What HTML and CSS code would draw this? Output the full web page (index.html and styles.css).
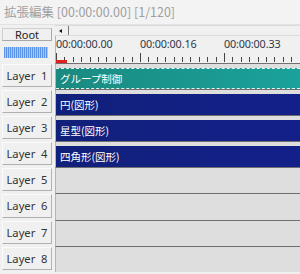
FILE: index.html
```html
<!DOCTYPE html>
<html>
<head>
<meta charset="utf-8">
<link rel="stylesheet" href="styles.css">
</head>
<body>
<div class="title">拡張編集 [00:00:00.00] [1/120]</div>
<div class="head">
  <div class="side-head">
    <div class="root">Root</div>
    <div class="meter"></div>
  </div>
  <div class="time-head">
    <div class="scroll"><span class="arrow"></span><span class="thumb"></span></div>
    <div class="ruler">
      <div class="labels"><span>00:00:00.00</span><span>00:00:00.16</span><span>00:00:00.33</span></div>
      <div class="ticks"></div>
      <div class="mark"></div>
    </div>
  </div>
</div>
<div class="layers">
  <div class="btn-cell"><div class="btn">Layer&nbsp;&nbsp;1</div></div>
  <div class="track"><div class="obj group">グループ制御</div></div>
  <div class="btn-cell"><div class="btn">Layer&nbsp;&nbsp;2</div></div>
  <div class="track"><div class="obj shape">円(図形)</div></div>
  <div class="btn-cell"><div class="btn">Layer&nbsp;&nbsp;3</div></div>
  <div class="track"><div class="obj shape">星型(図形)</div></div>
  <div class="btn-cell"><div class="btn">Layer&nbsp;&nbsp;4</div></div>
  <div class="track"><div class="obj shape">四角形(図形)</div></div>
  <div class="btn-cell"><div class="btn">Layer&nbsp;&nbsp;5</div></div>
  <div class="track"></div>
  <div class="btn-cell"><div class="btn">Layer&nbsp;&nbsp;6</div></div>
  <div class="track"></div>
  <div class="btn-cell"><div class="btn">Layer&nbsp;&nbsp;7</div></div>
  <div class="track"></div>
  <div class="btn-cell"><div class="btn">Layer&nbsp;&nbsp;8</div></div>
  <div class="track"></div>
</div>
</body>
</html>
```
FILE: styles.css
```css
html, body {
  margin: 0;
  padding: 0;
}
body {
  width: 300px;
  height: 274px;
  overflow: hidden;
  background: #f0f0f0;
  font-family: "Noto Sans", "Noto Sans CJK JP", sans-serif;
  color: #222;
}
.title {
  box-sizing: border-box;
  height: 25px;
  line-height: 24px;
  padding-left: 4px;
  font-size: 12.5px;
  color: #a0a0a0;
  background: #f3f3f3;
  border-bottom: 1px solid #e2e2e2;
  font-family: "Noto Sans CJK JP", "Noto Sans", sans-serif;
  white-space: nowrap;
}
.head {
  display: flex;
  height: 37.7px;
}
.side-head {
  width: 55px;
  flex: none;
  box-sizing: border-box;
  padding: 3px 3px 0 2px;
}
.root {
  box-sizing: border-box;
  height: 13px;
  line-height: 11px;
  font-size: 11px;
  text-align: center;
  background: #f0f0f0;
  border: 1px solid;
  border-color: #d0d0d0 #a8a8a8 #a8a8a8 #d0d0d0;
}
.meter {
  margin: 6px 0 0 2px;
  width: 44px;
  height: 11px;
  background: repeating-linear-gradient(to right, #5b93e6 0 1px, #a9c7f2 1px 2px);
}
.time-head {
  flex: 1;
  display: flex;
  flex-direction: column;
  min-width: 0;
}
.scroll {
  box-sizing: border-box;
  height: 11px;
  border-top: 1px solid #dadada;
  border-bottom: 1px solid #dadada;
  display: flex;
  align-items: center;
}
.arrow {
  margin-left: 4px;
  width: 0;
  height: 0;
  border-top: 2.5px solid transparent;
  border-bottom: 2.5px solid transparent;
  border-right: 3px solid #111;
}
.thumb {
  margin-left: 6px;
  align-self: stretch;
  width: 1px;
  background: #777;
}
.ruler {
  flex: 1;
  position: relative;
  border-left: 1px solid #62d6e4;
  overflow: hidden;
}
.labels {
  display: flex;
  height: 14px;
  margin-top: 1px;
  font-size: 10.8px;
  line-height: 14px;
  color: #2e3748;
  white-space: nowrap;
  letter-spacing: -0.15px;
}
.labels span {
  flex: none;
  width: 84px;
}
.ticks {
  position: absolute;
  left: 0;
  right: 0;
  bottom: 1px;
  height: 9px;
  background:
    repeating-linear-gradient(to right, #444 0 1px, transparent 1px 84px) bottom left / 100% 9px no-repeat,
    repeating-linear-gradient(to right, #444 0 1px, transparent 1px 8.4px) bottom left / 100% 5px no-repeat;
}
.mark {
  position: absolute;
  left: 0;
  bottom: 0;
  width: 11px;
  height: 3px;
  background: #e0201c;
}
.layers {
  display: grid;
  grid-template-columns: 55px 245px;
  grid-auto-rows: 26.17px;
}
.btn-cell {
  box-sizing: border-box;
  padding: 1px 3px 2px 2px;
}
.btn {
  box-sizing: border-box;
  height: 100%;
  background: #f0f0f0;
  border: 1px solid;
  border-color: #fbfbfb #b0b0b0 #b0b0b0 #fbfbfb;
  font-size: 11.2px;
  line-height: 21px;
  text-align: center;
  color: #333;
  white-space: nowrap;
}
.track {
  box-sizing: border-box;
  background: #dedede;
  border-top: 1px solid #707070;
  border-left: 1px solid #62d6e4;
  padding-top: 4px;
  overflow: hidden;
}
.obj {
  box-sizing: border-box;
  height: 100%;
  color: #fff;
  font-family: "Noto Sans CJK JP", sans-serif;
  font-size: 10.5px;
  padding-left: 4px;
  white-space: nowrap;
  display: flex;
  align-items: center;
}
.group {
  background: linear-gradient(to right, #1a8a80, #1aa29c);
  border-top: 1px dashed #e8f4f2;
  border-bottom: 1px dashed #e8f4f2;
}
.shape {
  background: linear-gradient(to right, #11207a, #14208a);
}
```
